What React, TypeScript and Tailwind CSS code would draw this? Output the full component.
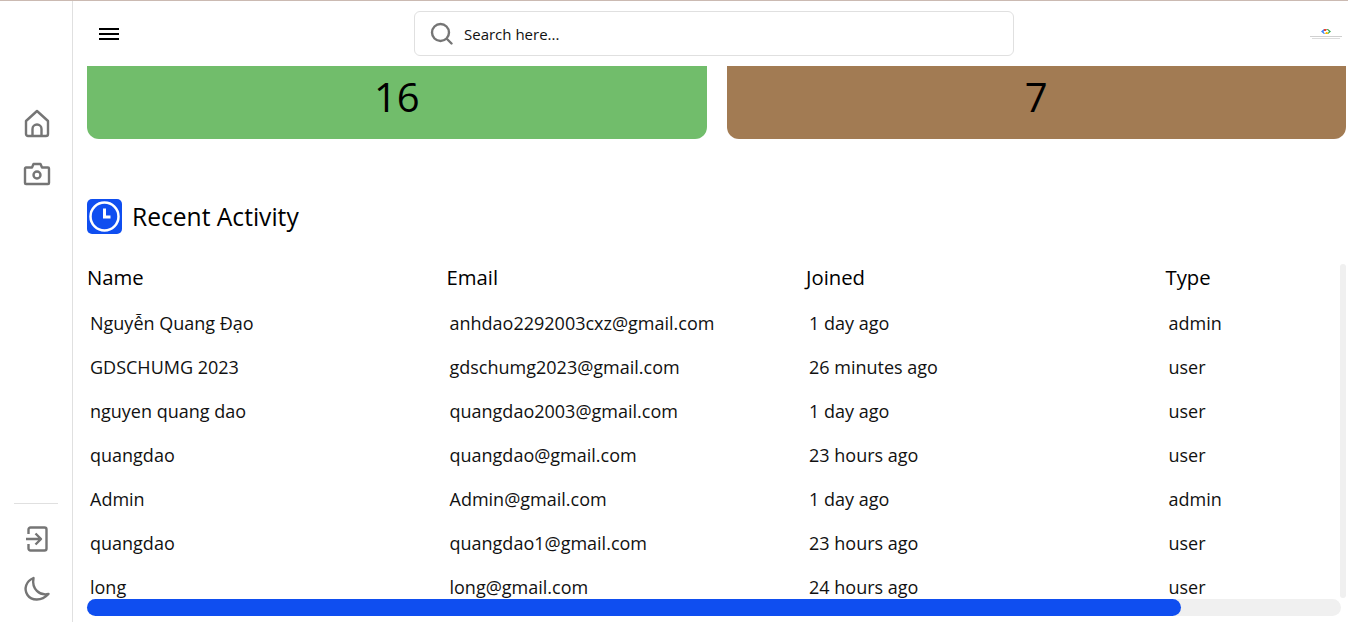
const rows = [
  { name: 'Nguyễn Quang Đạo', email: 'anhdao2292003cxz@gmail.com', joined: '1 day ago', type: 'admin' },
  { name: 'GDSCHUMG 2023', email: 'gdschumg2023@gmail.com', joined: '26 minutes ago', type: 'user' },
  { name: 'nguyen quang dao', email: 'quangdao2003@gmail.com', joined: '1 day ago', type: 'user' },
  { name: 'quangdao', email: 'quangdao@gmail.com', joined: '23 hours ago', type: 'user' },
  { name: 'Admin', email: 'Admin@gmail.com', joined: '1 day ago', type: 'admin' },
  { name: 'quangdao', email: 'quangdao1@gmail.com', joined: '23 hours ago', type: 'user' },
  { name: 'long', email: 'long@gmail.com', joined: '24 hours ago', type: 'user' },
]

const iconClass = 'fill-none stroke-[#757575] stroke-[2.400]'

const Sidebar = () => (
  <aside className="w-[73px] shrink-0 border-r border-[#e0e0e0] flex flex-col items-center">
    {/* Main nav */}
    <div className="flex flex-col items-center pt-[108px] gap-[23px] pl-[2px]">
      <svg width="28" height="30" viewBox="0 0 28 30" className={iconClass}>
        <path strokeLinejoin="round" d="M3 12 14 2l11 10v13a2 2 0 0 1-2 2H5a2 2 0 0 1-2-2z" />
        <path d="M9.500 27v-7a4.500 4.500 0 0 1 9 0v7" />
      </svg>
      <svg width="28" height="24" viewBox="0 0 28 24" className={iconClass}>
        <path strokeLinejoin="round" d="M3 5.500h6l1.500-3.500h7L19 5.500h6a1 1 0 0 1 1 1V21a1 1 0 0 1-1 1H3a1 1 0 0 1-1-1V6.500a1 1 0 0 1 1-1z" />
        <circle cx="14" cy="13" r="3.500" />
      </svg>
    </div>
    {/* Bottom actions */}
    <div className="mt-auto w-full flex flex-col items-center pb-[20px]">
      <div className="w-[44px] border-t border-[#e0e0e0] mb-[22px]" />
      <svg width="24" height="26" viewBox="0 0 24 26" className={`${iconClass} mb-[24px] ml-[2px]`}>
        <path strokeLinejoin="round" d="M3.500 8V3.500a2 2 0 0 1 2-2h14a2 2 0 0 1 2 2v19a2 2 0 0 1-2 2h-14a2 2 0 0 1-2-2V18" />
        <path strokeLinejoin="round" d="M1 13h14M10.500 7.500 16 13l-5.500 5.500" />
      </svg>
      <svg width="28" height="26" viewBox="0 0 28 26" className={`${iconClass} ml-[2px]`}>
        <path strokeLinejoin="round" d="M10.500 2C3 5 .5 13 4.500 19c4 6 14 6.500 21-1-9 2-17-5-15-16z" />
      </svg>
    </div>
  </aside>
)

const Header = () => (
  <header className="h-[65px] shrink-0 flex items-center">
    <div className="w-[341px] shrink-0 pl-[26px] flex flex-col gap-[3px]">
      <span className="block w-[20px] h-[2px] bg-black" />
      <span className="block w-[20px] h-[2px] bg-black" />
      <span className="block w-[20px] h-[2px] bg-black" />
    </div>
    <div className="w-[600px] h-[45px] border border-[#e0e0e0] rounded-md flex items-center pl-[15px] gap-[11px]">
      <svg width="23" height="23" viewBox="0 0 23 23" className={iconClass}>
        <circle cx="10.500" cy="10.500" r="8.500" />
        <path strokeLinecap="round" d="m17 17 4.500 4.500" />
      </svg>
      <span className="text-[15px] text-[#111] pt-[2px]">Search here...</span>
    </div>
    {/* Tiny logo */}
    <div className="ml-auto mr-[5px] w-[34px] flex flex-col items-center gap-[1px] mt-[1px]">
      <svg width="10" height="5" viewBox="0 0 10 5" className="mb-[1px]">
        <path d="M0 2.500 3 0h2L2.500 2.500 4 5H3z" fill="#4285f4" />
        <path d="M3 0h3L5 2H3z" fill="#ea4335" />
        <path d="M10 2.500 7 0H5.500L8 2.500 6 5h1z" fill="#34a853" />
        <path d="M4 5h3L6.500 3H5z" fill="#fbbc04" />
      </svg>
      <span className="block w-[32px] h-[1px] bg-[#d0d0d0]" />
      <span className="block w-[28px] h-[1px] bg-[#dcdcdc]" />
    </div>
  </header>
)

const App = () => {
  return (
    <div
      className="h-[622px] w-[1348px] overflow-hidden bg-white border-t border-[#cbbab2] flex text-black"
      style={{ fontFamily: '"Open Sans", sans-serif' }}
    >
      <Sidebar />
      <div className="flex-1 min-w-0 flex flex-col">
        <Header />
        <main className="flex-1 min-h-0 pl-[14px] pr-[2px] overflow-hidden relative">
          {/* Stat cards */}
          <div className="grid grid-cols-2 gap-[20px]">
            <div className="h-[73px] bg-[#71bd6b] rounded-b-xl flex items-center justify-center pb-[12px] text-[40px] leading-none">
              16
            </div>
            <div className="h-[73px] bg-[#a27b53] rounded-b-xl flex items-center justify-center pb-[12px] text-[40px] leading-none">
              7
            </div>
          </div>

          {/* Recent Activity */}
          <div className="flex items-center gap-[10px] mt-[60px] h-[35px]">
            <div className="w-[35px] h-[35px] rounded-[5px] bg-[#0f4ef0] flex items-center justify-center">
              <svg width="31" height="31" viewBox="0 0 31 31" className="fill-none stroke-white">
                <circle cx="15.500" cy="15.500" r="14" strokeWidth="2.500" />
                <path d="M15.500 7.500v8.500h6" strokeWidth="3" />
              </svg>
            </div>
            <h2 className="text-[24.600px] leading-none pt-[1px]">Recent Activity</h2>
          </div>

          <div className="grid grid-cols-4 mt-[28px] w-[1438px]">
            {['Name', 'Email', 'Joined', 'Type'].map((col) => (
              <div key={col} className="h-[39px] flex items-center text-[20.300px] font-[500] pb-[9px]">
                {col}
              </div>
            ))}
          </div>
          <div className="w-[1438px]">
            {rows.map((row, i) => (
              <div key={i} className="grid grid-cols-4 h-[44px] items-center text-[18px] text-[#111]">
                <div className="pl-[3px]">{row.name}</div>
                <div className="pl-[3px]">{row.email}</div>
                <div className="pl-[3px]">{row.joined}</div>
                <div className="pl-[3px]">{row.type}</div>
              </div>
            ))}
          </div>

          {/* Scrollbars */}
          <div className="absolute right-[2px] top-[198px] h-[334px] w-[6px] rounded-full bg-[#f0f0f0]" />
          <div className="absolute left-[14px] right-[7px] bottom-[6px] h-[17px] rounded-full bg-[#f0f0f0]">
            <div className="h-full w-[1094px] rounded-full bg-[#0f4ef0]" />
          </div>
        </main>
      </div>
    </div>
  )
}

export default App
